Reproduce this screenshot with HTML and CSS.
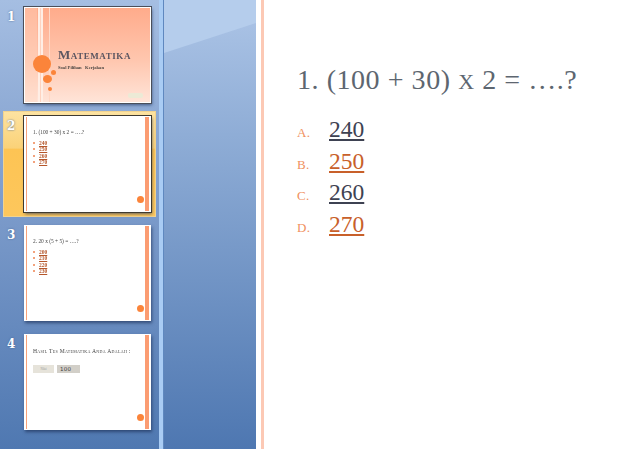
FILE: index.html
```html
<!DOCTYPE html>
<html lang="id">
<head>
<meta charset="utf-8">
<title>Matematika</title>
<link rel="stylesheet" href="styles.css">
</head>
<body>
<div class="app">
  <aside class="thumbs">
    <div class="row">
      <span class="num">1</span>
      <div class="thumb cover">
        <span class="band b0"></span><span class="band b1"></span><span class="band b2"></span><span class="band b3"></span>
        <span class="dot d1"></span><span class="dot d2"></span><span class="dot d3"></span><span class="dot d4"></span>
        <div class="cover-text">
          <div class="cover-title">Matematika</div>
          <div class="cover-sub">Soal Pilihan &nbsp; Kerjakan</div>
        </div>
        <span class="cover-btn"></span>
      </div>
    </div>
    <div class="row active">
      <span class="num">2</span>
      <div class="thumb plain">
        <span class="edge-l"></span><span class="edge-r"></span><span class="dot corner"></span>
        <div class="mini">
          <div class="mini-q">1. (100 + 30) x 2 = ….?</div>
          <ul class="mini-list"><li>240</li><li>250</li><li>260</li><li>270</li></ul>
        </div>
      </div>
    </div>
    <div class="row">
      <span class="num">3</span>
      <div class="thumb plain">
        <span class="edge-l"></span><span class="edge-r"></span><span class="dot corner"></span>
        <div class="mini">
          <div class="mini-q">2. 20 x (5 + 5) = ….?</div>
          <ul class="mini-list"><li>200</li><li>210</li><li>220</li><li>230</li></ul>
        </div>
      </div>
    </div>
    <div class="row">
      <span class="num">4</span>
      <div class="thumb plain">
        <span class="edge-l"></span><span class="edge-r"></span><span class="dot corner"></span>
        <div class="mini">
          <div class="mini-h">Hasil Tes Matematika Anda Adalah :</div>
          <div class="mini-score"><span class="score-l">Nilai</span><span class="score-v">100</span></div>
        </div>
      </div>
    </div>
  </aside>
  <div class="divider"></div>
  <div class="gutter"></div>
  <div class="seam"></div>
  <main class="slide">
    <h1 class="question">1. (100 + 30) <span class="x">X</span> 2 = ….?</h1>
    <ol class="answers">
      <li><span class="key">A.</span><a class="ans">240</a></li>
      <li><span class="key">B.</span><a class="ans alt">250</a></li>
      <li><span class="key">C.</span><a class="ans">260</a></li>
      <li><span class="key">D.</span><a class="ans alt">270</a></li>
    </ol>
  </main>
</div>
</body>
</html>
```
FILE: styles.css
```css
* { box-sizing: border-box; }
html, body { margin: 0; padding: 0; }
body { width: 635px; height: 449px; overflow: hidden; background: #fff; font-family: "Liberation Serif", serif; }
.app { display: flex; height: 449px; }

.thumbs {
  width: 159px; height: 449px; flex: none;
  padding: 2px 3px 0;
  display: flex; flex-direction: column; gap: 3px;
  background: linear-gradient(180deg, #a5bee2 0%, #7d9ccb 45%, #4f78b1 100%);
}
.row {
  height: 106px; width: 153px; flex: none;
  display: flex; align-items: center;
  padding-left: 4px;
}
.row.active {
  background: linear-gradient(180deg, #fde3a2 0%, #fbd278 35%, #fdc454 36%, #fdc75c 100%);
  box-shadow: inset 0 0 0 1px #f2d38e;
}
.num {
  width: 17px; flex: none; align-self: flex-start; margin-top: 8px;
  font: bold 12px "DejaVu Serif", serif; color: #fff;
  text-shadow: 0 0 2px #40608f;
}
.thumb {
  position: relative; width: 127px; height: 96px; flex: none;
  box-shadow: 1px 2px 3px rgba(30, 50, 90, .7);
  overflow: hidden;
}
.cover {
  background: linear-gradient(180deg, #ffab8b 0%, #ffc6ae 55%, #ffe4d8 100%);
  border: 1px solid #fff;
  outline: 1px solid #4a4f5a; outline-offset: 0;
}
.plain { background: #fff; }
.active .thumb { outline: 1px solid #3f3a30; outline-offset: 0; }

.band { position: absolute; top: 0; bottom: 0; background: #ffd8c6; }
.b0 { left: 0; width: 12px; background: rgba(255, 215, 195, .35); }
.b1 { left: 13px; width: 5px; background: #ffeee5; }
.b2 { left: 15px; width: 1px; background: #ffd3c0; }
.b3 { left: 24px; width: 1px; }
.dot { position: absolute; border-radius: 50%; background: #fb843a; }
.d1 { left: 8px; top: 47px; width: 18px; height: 18px; }
.d2 { left: 26px; top: 62px; width: 5px; height: 5px; }
.d3 { left: 18px; top: 67px; width: 9px; height: 8px; }
.d4 { left: 23px; top: 79px; width: 4px; height: 4px; }
.cover-text { position: absolute; left: 33px; top: 39px; }
.cover-title { font: bold 13px "Liberation Serif", serif; font-variant: small-caps; color: #5b5560; letter-spacing: .55px; white-space: nowrap; filter: blur(.3px); }
.cover-sub { font: bold 4.6px "Liberation Serif", serif; color: #4d4642; margin-top: 2px; white-space: nowrap; filter: blur(.25px); }
.cover-btn { position: absolute; right: 7px; bottom: 4px; width: 15px; height: 5px; border-radius: 2px; background: #ecead6; }

.edge-l { position: absolute; left: 2px; top: 1px; bottom: 1px; width: 1px; background: #f8a27a; }
.edge-r { position: absolute; right: 2px; top: 1px; bottom: 1px; width: 4px; background: #fb9c72; }
.corner { right: 7px; bottom: 9px; width: 7px; height: 7px; }
.mini { padding: 13px 0 0 9px; }
.mini-q { font-size: 5.4px; line-height: 7px; color: #444; white-space: nowrap; filter: blur(.3px); }
.mini-list { list-style: none; margin: 4px 0 0; padding: 0; }
.mini-list li {
  height: 6.3px; line-height: 6px; font-size: 5.5px; font-weight: bold; color: #b5562a;
  text-decoration: underline; padding-left: 6px; position: relative; filter: blur(.25px);
}
.mini-list li::before { content: ""; position: absolute; left: 0; top: 2px; width: 2px; height: 2px; background: #f3a27c; }
.mini-h { font-size: 5.6px; line-height: 7px; color: #444; font-variant: small-caps; white-space: nowrap; letter-spacing: .3px; filter: blur(.3px); margin-top: 1px; }
.mini-score { display: flex; gap: 3px; margin-top: 10px; }
.score-l { width: 21px; height: 8px; background: #e6e3da; font-size: 3px; line-height: 8px; text-align: center; color: #999; }
.score-v { width: 23px; height: 8px; background: #d2cfc8; font: 5.5px/8px "DejaVu Sans", sans-serif; color: #444; padding-left: 3px; letter-spacing: .3px; }

.divider { width: 5px; flex: none; background: #a9ccf4; border-right: 1px solid #5f88bf; }
.gutter {
  width: 92px; flex: none; position: relative;
  background: linear-gradient(180deg, #adc5e7 0%, #8fadd6 30%, #4e77b1 100%);
}
.gutter::before {
  content: ""; position: absolute; inset: 0;
  background: #b5cdec;
  clip-path: polygon(0 0, 100% 0, 100% 23px, 0 53px);
}
.seam { width: 8px; flex: none; background: #fff; border-right: 3px solid #fcc9b5; }
.slide { flex: 1; padding: 64px 0 0 33px; color: #5d6670; }
.question { margin: 0; font-size: 28px; font-weight: normal; line-height: 32px; white-space: nowrap; letter-spacing: .55px; }
.x { font-size: 22px; }
.answers { list-style: none; margin: 18px 0 0; padding: 0; }
.answers li { display: flex; align-items: baseline; height: 31.7px; }
.key { width: 32px; flex: none; font-size: 13px; color: #f0905e; letter-spacing: .4px; }
.ans { font-size: 23.5px; color: #3e4252; text-decoration: underline; text-underline-offset: 2px; }
.ans.alt { color: #c8602a; }
```
